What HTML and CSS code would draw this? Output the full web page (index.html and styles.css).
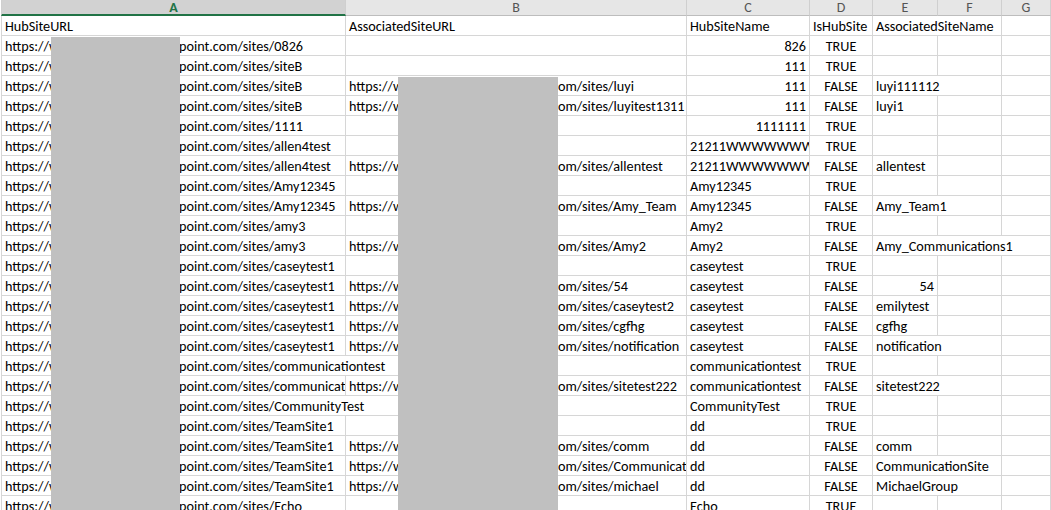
FILE: index.html
```html
<!DOCTYPE html>
<html>
<head>
<meta charset="utf-8">
<link rel="stylesheet" href="styles.css">
</head>
<body>
<div class="sheet">
  <div class="hdr">
    <div class="h sel">A</div><div class="h">B</div><div class="h">C</div><div class="h">D</div><div class="h">E</div><div class="h">F</div><div class="h">G</div>
  </div>
  <div class="row"><div class="c">HubSiteURL</div><div class="c">AssociatedSiteURL</div><div class="c">HubSiteName</div><div class="c">IsHubSite</div><div class="c s2">AssociatedSiteName</div><div class="c"></div></div>
  <div class="row"><div class="c"><span class="pa">https://w</span>point.com/sites/0826</div><div class="c"></div><div class="c r">826</div><div class="c m">TRUE</div><div class="c"></div><div class="c"></div><div class="c"></div></div>
  <div class="row"><div class="c"><span class="pa">https://w</span>point.com/sites/siteB</div><div class="c"></div><div class="c r">111</div><div class="c m">TRUE</div><div class="c"></div><div class="c"></div><div class="c"></div></div>
  <div class="row"><div class="c"><span class="pa">https://w</span>point.com/sites/siteB</div><div class="c"><span class="pb">https://w</span>om/sites/luyi</div><div class="c r">111</div><div class="c m">FALSE</div><div class="c s2">luyi111112</div><div class="c"></div></div>
  <div class="row"><div class="c"><span class="pa">https://w</span>point.com/sites/siteB</div><div class="c"><span class="pb">https://w</span>om/sites/luyitest1311</div><div class="c r">111</div><div class="c m">FALSE</div><div class="c">luyi1</div><div class="c"></div><div class="c"></div></div>
  <div class="row"><div class="c"><span class="pa">https://w</span>point.com/sites/1111</div><div class="c"></div><div class="c r">1111111</div><div class="c m">TRUE</div><div class="c"></div><div class="c"></div><div class="c"></div></div>
  <div class="row"><div class="c"><span class="pa">https://w</span>point.com/sites/allen4test</div><div class="c"></div><div class="c">21211WWWWWWW</div><div class="c m">TRUE</div><div class="c"></div><div class="c"></div><div class="c"></div></div>
  <div class="row"><div class="c"><span class="pa">https://w</span>point.com/sites/allen4test</div><div class="c"><span class="pb">https://w</span>om/sites/allentest</div><div class="c">21211WWWWWWW</div><div class="c m">FALSE</div><div class="c">allentest</div><div class="c"></div><div class="c"></div></div>
  <div class="row"><div class="c"><span class="pa">https://w</span>point.com/sites/Amy12345</div><div class="c"></div><div class="c">Amy12345</div><div class="c m">TRUE</div><div class="c"></div><div class="c"></div><div class="c"></div></div>
  <div class="row"><div class="c"><span class="pa">https://w</span>point.com/sites/Amy12345</div><div class="c"><span class="pb">https://w</span>om/sites/Amy_Team</div><div class="c">Amy12345</div><div class="c m">FALSE</div><div class="c s2">Amy_Team1</div><div class="c"></div></div>
  <div class="row"><div class="c"><span class="pa">https://w</span>point.com/sites/amy3</div><div class="c"></div><div class="c">Amy2</div><div class="c m">TRUE</div><div class="c"></div><div class="c"></div><div class="c"></div></div>
  <div class="row"><div class="c"><span class="pa">https://w</span>point.com/sites/amy3</div><div class="c"><span class="pb">https://w</span>om/sites/Amy2</div><div class="c">Amy2</div><div class="c m">FALSE</div><div class="c s3">Amy_Communications1</div></div>
  <div class="row"><div class="c"><span class="pa">https://w</span>point.com/sites/caseytest1</div><div class="c"></div><div class="c">caseytest</div><div class="c m">TRUE</div><div class="c"></div><div class="c"></div><div class="c"></div></div>
  <div class="row"><div class="c"><span class="pa">https://w</span>point.com/sites/caseytest1</div><div class="c"><span class="pb">https://w</span>om/sites/54</div><div class="c">caseytest</div><div class="c m">FALSE</div><div class="c r">54</div><div class="c"></div><div class="c"></div></div>
  <div class="row"><div class="c"><span class="pa">https://w</span>point.com/sites/caseytest1</div><div class="c"><span class="pb">https://w</span>om/sites/caseytest2</div><div class="c">caseytest</div><div class="c m">FALSE</div><div class="c">emilytest</div><div class="c"></div><div class="c"></div></div>
  <div class="row"><div class="c"><span class="pa">https://w</span>point.com/sites/caseytest1</div><div class="c"><span class="pb">https://w</span>om/sites/cgfhg</div><div class="c">caseytest</div><div class="c m">FALSE</div><div class="c">cgfhg</div><div class="c"></div><div class="c"></div></div>
  <div class="row"><div class="c"><span class="pa">https://w</span>point.com/sites/caseytest1</div><div class="c"><span class="pb">https://w</span>om/sites/notification</div><div class="c">caseytest</div><div class="c m">FALSE</div><div class="c s2">notification</div><div class="c"></div></div>
  <div class="row"><div class="c s2"><span class="pa">https://w</span>point.com/sites/communicationtest</div><div class="c">communicationtest</div><div class="c m">TRUE</div><div class="c"></div><div class="c"></div><div class="c"></div></div>
  <div class="row"><div class="c"><span class="pa">https://w</span>point.com/sites/communicationtest</div><div class="c"><span class="pb">https://w</span>om/sites/sitetest222</div><div class="c">communicationtest</div><div class="c m">FALSE</div><div class="c s2">sitetest222</div><div class="c"></div></div>
  <div class="row"><div class="c s2"><span class="pa">https://w</span>point.com/sites/CommunityTest</div><div class="c">CommunityTest</div><div class="c m">TRUE</div><div class="c"></div><div class="c"></div><div class="c"></div></div>
  <div class="row"><div class="c"><span class="pa">https://w</span>point.com/sites/TeamSite1</div><div class="c"></div><div class="c">dd</div><div class="c m">TRUE</div><div class="c"></div><div class="c"></div><div class="c"></div></div>
  <div class="row"><div class="c"><span class="pa">https://w</span>point.com/sites/TeamSite1</div><div class="c"><span class="pb">https://w</span>om/sites/comm</div><div class="c">dd</div><div class="c m">FALSE</div><div class="c">comm</div><div class="c"></div><div class="c"></div></div>
  <div class="row"><div class="c"><span class="pa">https://w</span>point.com/sites/TeamSite1</div><div class="c"><span class="pb">https://w</span>om/sites/CommunicationSite</div><div class="c">dd</div><div class="c m">FALSE</div><div class="c s2">CommunicationSite</div><div class="c"></div></div>
  <div class="row"><div class="c"><span class="pa">https://w</span>point.com/sites/TeamSite1</div><div class="c"><span class="pb">https://w</span>om/sites/michael</div><div class="c">dd</div><div class="c m">FALSE</div><div class="c s2">MichaelGroup</div><div class="c"></div></div>
  <div class="row"><div class="c"><span class="pa">https://w</span>point.com/sites/Echo</div><div class="c"></div><div class="c">Echo</div><div class="c m">TRUE</div><div class="c"></div><div class="c"></div><div class="c"></div></div>
  <div class="mask mask-a"></div>
  <div class="mask mask-b"></div>
</div>
</body>
</html>
```

FILE: styles.css
```css
* { box-sizing: border-box; }
html, body { margin: 0; padding: 0; background: #fff; }
body {
  font-family: Calibri, Carlito, "Open Sans", sans-serif;
  font-size: 14.2px;
  color: #000;
  overflow: hidden;
}
.sheet {
  position: relative;
  width: 1051px;
  height: 510px;
  overflow: hidden;
  padding-left: 1px;
}
.hdr, .row {
  display: grid;
  grid-template-columns: 345px 341px 123px 63px 65px 64px 1fr;
}
.hdr { height: 16px; }
.h {
  height: 16px;
  background: #e6e6e6;
  border-right: 1px solid #cfcfcf;
  border-bottom: 1px solid #bdbdbd;
  color: #555;
  text-align: center;
  font-size: 14px;
  line-height: 15px;
}
.h.sel {
  background: #d2d2d2;
  color: #217346;
  font-weight: bold;
  border-bottom: 2px solid #217346;
  border-left: 1px solid #cfcfcf;
}
.row { height: 20px; }
.c {
  height: 20px;
  border-right: 1px solid #d6d6d6;
  border-bottom: 1px solid #d6d6d6;
  padding: 1px 3px 0;
  line-height: 19px;
  white-space: nowrap;
  overflow: hidden;
}
.row .c:first-child { border-left: 1px solid #d6d6d6; }
.c.r { text-align: right; }
.c.m { text-align: center; }
.s2 { grid-column: span 2; }
.s3 { grid-column: span 3; }
.pa, .pb {
  display: inline-block;
  vertical-align: top;
  overflow: hidden;
}
.pa { width: 174px; }
.pb { width: 209px; }
.mask {
  position: absolute;
  background: #c0c0c0;
  bottom: 0;
}
.mask-a { left: 51px; width: 129px; top: 37px; }
.mask-b { left: 398px; width: 160px; top: 77px; }
```
